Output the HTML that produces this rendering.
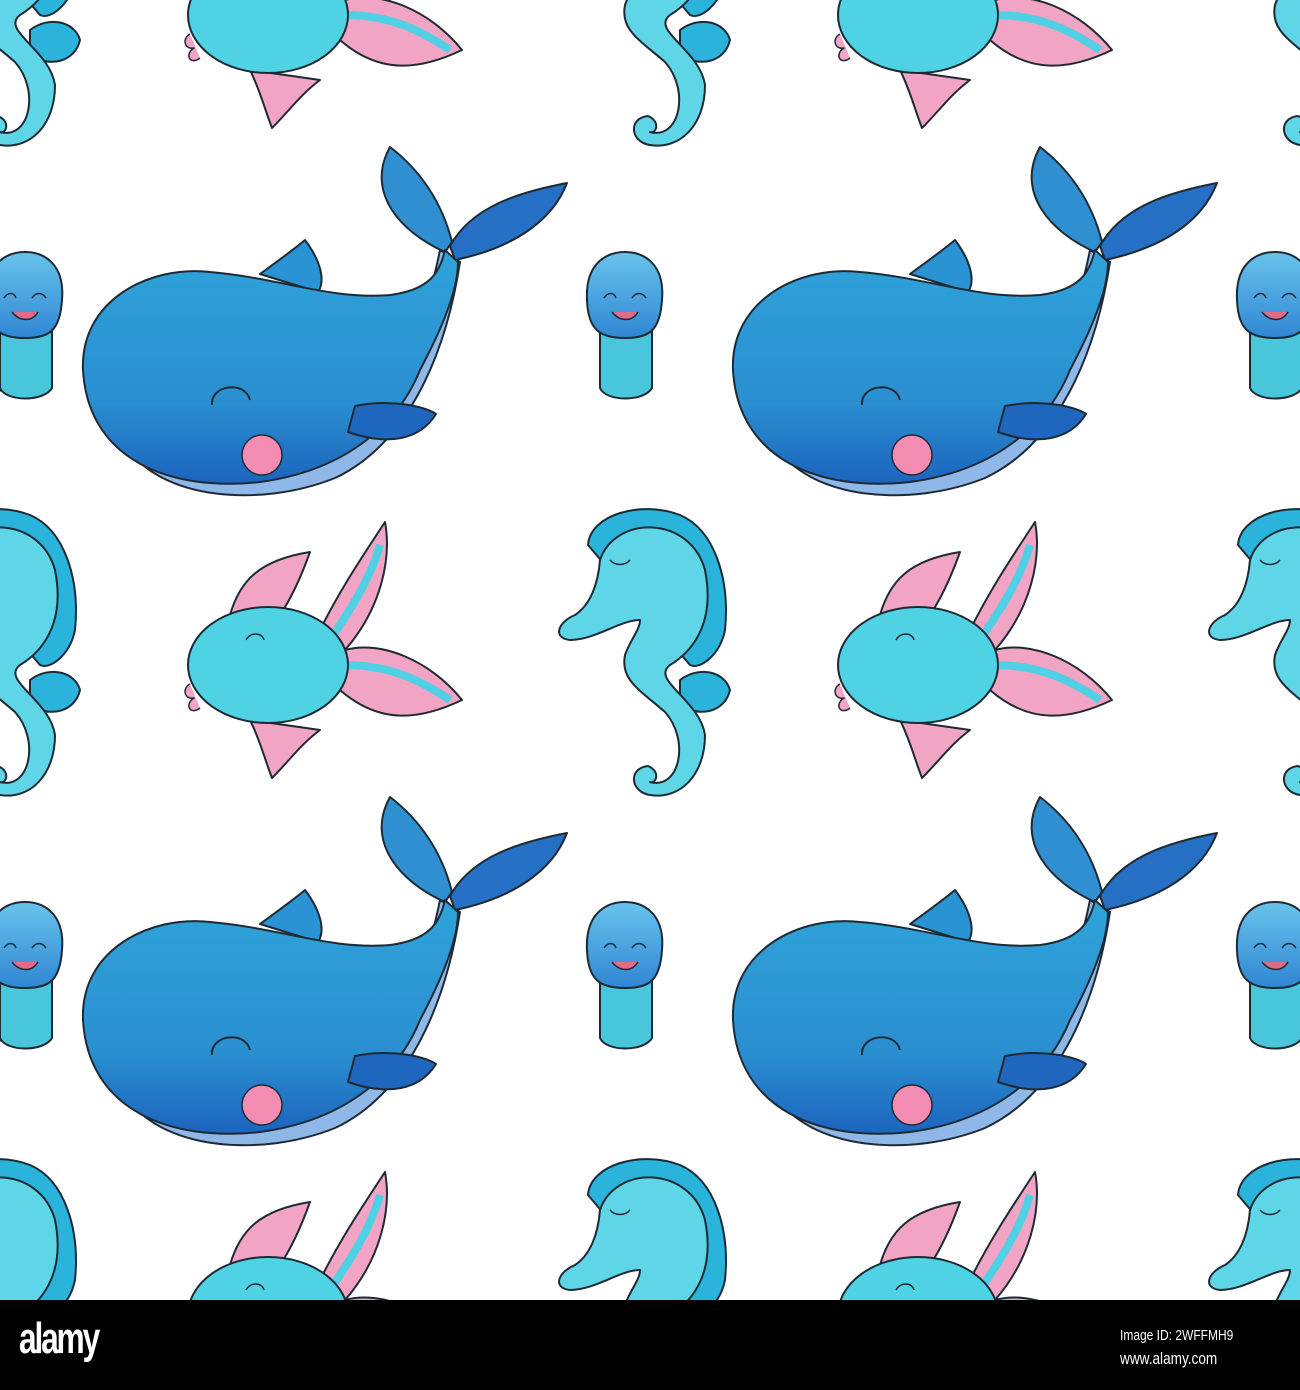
<!DOCTYPE html>
<html><head><meta charset="utf-8"><style>
html,body{margin:0;padding:0;width:1300px;height:1390px;overflow:hidden;background:#fff}
svg{position:absolute;left:0;top:0}
.bar{position:absolute;left:0;top:1300px;width:1300px;height:90px;background:#000;color:#fff;font-family:"Liberation Sans",sans-serif}
.logo{position:absolute;left:19px;top:14px;font-size:44px;font-weight:bold;letter-spacing:-3px;transform:scaleX(0.72);transform-origin:left}
.id{position:absolute;left:1120px;top:27px;font-size:15px;transform:scaleX(0.8);transform-origin:left;white-space:nowrap}
.www{position:absolute;left:1120px;top:49px;font-size:17px;transform:scaleX(0.8);transform-origin:left;white-space:nowrap}
</style></head><body>
<svg width="1300" height="1300" viewBox="0 0 1300 1300">
<defs>
<linearGradient id="wg" x1="0" y1="0" x2="0" y2="1"><stop offset="0" stop-color="#2fa3da"/><stop offset="0.65" stop-color="#2a8fd0"/><stop offset="1" stop-color="#1c64bd"/></linearGradient>
<linearGradient id="jg" x1="0" y1="0" x2="0" y2="1"><stop offset="0" stop-color="#69c3ec"/><stop offset="1" stop-color="#2f86d3"/></linearGradient>
<g id="jelly" stroke="#1e2a33" stroke-width="2" stroke-linejoin="round">
 <path d="M600 330 L600 388 C606 402 644 402 652 388 L652 330 Z" fill="#4ac6dc"/>
 <path d="M587 300 C585 260 610 252 625 252 C645 252 665 265 662 300 C660 330 650 338 625 338 C600 338 588 330 587 300 Z" fill="url(#jg)"/>
 <path d="M612 312 C620 322 632 322 638 312" fill="#e06a8a" stroke-width="1.5"/>
 <path d="M604 298 C608 292 614 292 616 298 M632 298 C636 292 642 292 646 298" fill="none" stroke-width="1.5"/>
</g>
<g id="tile" stroke="#1e2a33" stroke-width="2" stroke-linejoin="round">
 <path d="M125 445 C160 500 260 508 335 478 C405 445 445 360 460 262 L440 250 C420 350 380 420 300 450 Z" fill="#8fb8e8"/>
 <path d="M260 274 C282 258 298 246 305 240 C320 260 326 280 318 292 Z" fill="#2a93d3"/>
 <path d="M445 252 C400 232 365 192 390 147 C420 170 442 202 452 242 Z" fill="#2f8fd0"/>
 <path d="M450 246 C472 206 520 192 567 183 C552 222 512 248 455 260 Z" fill="#2570c4"/>
 <path d="M83 370 C80 300 150 265 210 272 C280 278 330 300 390 295 C430 290 440 272 445 250 L458 262 C458 292 440 332 420 370 C400 420 350 470 260 482 C170 492 88 460 83 370 Z" fill="url(#wg)"/>
 <path d="M355 406 C395 398 428 408 436 414 C420 440 388 446 348 432 Z" fill="#1f66bf"/>
 <circle cx="262" cy="455" r="20" fill="#f28cb2" stroke-width="1.5"/>
 <path d="M212 405 C210 385 245 380 250 400" fill="none"/>
 <use href="#jelly"/>
 <path d="M320 630 C340 590 360 560 385 522 C392 560 380 610 345 650 C380 640 430 660 462 700 C420 720 380 725 340 690 Z" fill="#f2a4c4"/>
 <path d="M330 640 C350 610 370 580 380 545 M345 665 C390 665 420 680 450 700" fill="none" stroke="#4fd0e4" stroke-width="8"/>
 <path d="M230 615 C240 580 260 560 310 552 C300 580 290 600 280 615 Z" fill="#f2a4c4"/>
 <path d="M250 720 C260 740 265 760 272 778 C290 760 300 745 320 730 Z" fill="#f2a4c4"/>
 <ellipse cx="268" cy="665" rx="80" ry="58" fill="#4fd2e4"/>
 <path d="M190 684 C182 688 184 700 194 698 C184 704 190 716 200 708" fill="#f3a3c3" stroke-width="1.5"/>
 <path d="M246 640 C250 632 262 632 264 640" fill="none" stroke-width="1.5"/>
 <path d="M588 545 C590 515 640 500 680 515 C715 530 730 580 725 630 C720 655 700 670 690 665 Z" fill="#2ab4dc"/>
 <path d="M680 680 C700 665 725 672 730 690 C725 712 700 718 680 705 Z" fill="#2bb3dc"/>
 <path d="M600 560 C615 515 690 515 705 570 C715 620 695 650 670 665 C650 680 700 700 705 735 C705 775 680 800 650 795 C630 792 628 768 648 766 C662 772 655 785 650 782 C680 790 690 740 665 712 C640 690 620 680 625 655 C630 640 640 630 640 620 C620 620 595 640 570 640 C552 638 558 622 575 615 C590 605 598 585 600 560 Z" fill="#5fd6e8"/>
 <path d="M610 560 C615 566 625 566 630 560" fill="none" stroke-width="1.5"/>
</g>
</defs>
<use href="#tile" x="-650" y="-650"/><use href="#tile" x="0" y="-650"/><use href="#tile" x="650" y="-650"/>
<use href="#tile" x="-650" y="0"/><use href="#tile" x="0" y="0"/><use href="#tile" x="650" y="0"/>
<use href="#tile" x="-650" y="650"/><use href="#tile" x="0" y="650"/><use href="#tile" x="650" y="650"/>
<use href="#jelly" x="-600" y="0"/><use href="#jelly" x="-600" y="650"/>
</svg>
<div class="bar"><div class="logo">alamy</div><div class="id">Image ID: 2WFFMH9</div><div class="www">www.alamy.com</div></div>
</body></html>
